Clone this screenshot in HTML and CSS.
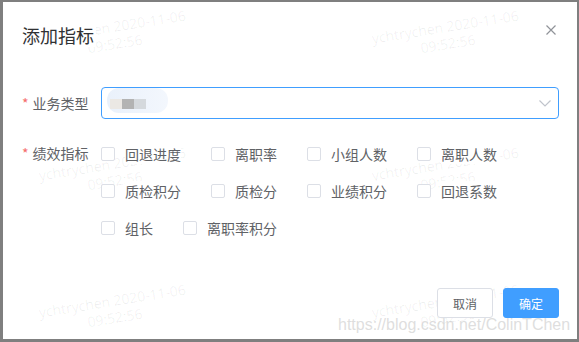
FILE: index.html
```html
<!DOCTYPE html>
<html lang="zh-CN">
<head>
  <meta charset="UTF-8">
  <meta name="viewport" content="width=device-width, initial-scale=1.0">
  <title>添加指标</title>
  <link rel="stylesheet" href="styles.css">
</head>
<body>

  <!-- Dialog -->
  <div class="dialog">

    <!-- user watermark, tiled under the content -->
    <div class="watermarks">
      <div class="wm"><span>ychtrychen 2020-11-06</span><span>09:52:56</span></div>
      <div class="wm"><span>ychtrychen 2020-11-06</span><span>09:52:56</span></div>
      <div class="wm"><span>ychtrychen 2020-11-06</span><span>09:52:56</span></div>
      <div class="wm"><span>ychtrychen 2020-11-06</span><span>09:52:56</span></div>
      <div class="wm"><span>ychtrychen 2020-11-06</span><span>09:52:56</span></div>
      <div class="wm"><span>ychtrychen 2020-11-06</span><span>09:52:56</span></div>
    </div>

    <div class="dialog-header">
      <span class="dialog-title">添加指标</span>
      <button class="dialog-close" aria-label="Close">
        <svg width="10" height="10" viewBox="0 0 10 10">
          <path d="M0.5 0.5 L9.5 9.5 M9.5 0.5 L0.5 9.5" stroke="#909399" stroke-width="1.2" fill="none"/>
        </svg>
      </button>
    </div>

    <div class="dialog-body">
      <div class="form-item">
        <label class="form-label"><i class="req">*</i>业务类型</label>
        <div class="select">
          <span class="blur-pill">
            <b class="px px1"></b><b class="px px2"></b><b class="px px3"></b>
          </span>
          <svg class="select-arrow" width="12" height="7" viewBox="0 0 12 7">
            <path d="M0.5 0.5 L6 6 L11.5 0.5" stroke="#c0c4cc" stroke-width="1.2" fill="none"/>
          </svg>
        </div>
      </div>

      <div class="form-item form-item-checks">
        <label class="form-label"><i class="req">*</i>绩效指标</label>
        <div class="check-group">
          <label class="check"><span class="check-box"></span><span class="check-text">回退进度</span></label>
          <label class="check"><span class="check-box"></span><span class="check-text">离职率</span></label>
          <label class="check"><span class="check-box"></span><span class="check-text">小组人数</span></label>
          <label class="check"><span class="check-box"></span><span class="check-text">离职人数</span></label>
          <label class="check"><span class="check-box"></span><span class="check-text">质检积分</span></label>
          <label class="check"><span class="check-box"></span><span class="check-text">质检分</span></label>
          <label class="check"><span class="check-box"></span><span class="check-text">业绩积分</span></label>
          <label class="check"><span class="check-box"></span><span class="check-text">回退系数</span></label>
          <label class="check"><span class="check-box"></span><span class="check-text">组长</span></label>
          <label class="check"><span class="check-box"></span><span class="check-text">离职率积分</span></label>
        </div>
      </div>
    </div>

    <div class="dialog-footer">
      <button class="btn">取消</button>
      <button class="btn btn-primary">确定</button>
    </div>

    <div class="csdn-mark">https://blog.csdn.net/ColinTChen</div>
  </div>

</body>
</html>
```

FILE: styles.css
```css
body {
  margin: 0;
  background-color: #7f7f7f;
  font-family: "Noto Sans CJK SC", "Noto Sans", sans-serif;
}

/* Dialog */
.dialog {
  position: relative;
  width: 574px;
  height: 337px;
  margin: 2px 2px 3px 3px;
  background-color: #fff;
  overflow: hidden;
  display: flex;
  flex-direction: column;
}

.watermarks {
  position: absolute;
  top: -36px;
  left: -56px;
  display: grid;
  grid-template-columns: repeat(2, 333px);
  grid-auto-rows: 137px;
  z-index: 0;
}

.wm {
  display: flex;
  flex-direction: column;
  align-items: center;
  justify-content: center;
  transform: rotate(-9deg);
  font-family: "Open Sans", sans-serif;
  font-size: 14px;
  line-height: 17px;
  color: rgba(0, 0, 0, 0.065);
  white-space: nowrap;
}

.dialog-header,
.dialog-body,
.dialog-footer {
  position: relative;
  z-index: 1;
}

.dialog-header {
  padding: 21px 18px 0 19px;
  height: 24px;
}

.dialog-title {
  display: inline-block;
  font-size: 18px;
  line-height: 24px;
  color: #303133;
  background-color: #fff;
  padding-right: 2px;
}

.dialog-close {
  position: absolute;
  top: 23px;
  right: 21px;
  width: 10px;
  height: 10px;
  padding: 0;
  border: none;
  background: none;
  display: flex;
}

/* Form */
.dialog-body {
  padding: 40px 18px 0 19px;
}

.form-item {
  display: flex;
  align-items: flex-start;
}

.form-item-checks {
  margin-top: 16px;
}

.form-label {
  flex: 0 0 79px;
  font-size: 14px;
  line-height: 32px;
  color: #606266;
}

.form-item-checks .form-label {
  line-height: 37px;
}

.req {
  font-style: normal;
  color: #f56c6c;
  margin-right: 4px;
}

.select {
  flex: 1;
  height: 30px;
  border: 1px solid #409eff;
  border-radius: 4px;
  display: flex;
  align-items: flex-start;
  padding-left: 5px;
  padding-right: 7px;
}

.blur-pill {
  display: flex;
  align-items: flex-start;
  width: 58px;
  height: 25px;
  padding-left: 3px;
  border-radius: 12px;
  background: linear-gradient(90deg, #eaf1fb, #f3f7fd);
}

.px {
  width: 12px;
  height: 10px;
  margin-top: 11px;
}

.px1 { background-color: #ebe8e4; }
.px2 { background-color: #b3b3b3; }
.px3 { background-color: #d5d9dd; }

.select-arrow {
  margin-left: auto;
  margin-top: 12px;
}

.check-group {
  flex: 1;
  display: flex;
  flex-wrap: wrap;
}

.check {
  display: flex;
  align-items: center;
  height: 37px;
  margin-right: 30px;
  font-size: 14px;
  color: #606266;
}

.check-box {
  width: 12px;
  height: 12px;
  border: 1px solid #dcdfe6;
  border-radius: 2px;
  background-color: #fff;
}

.check-text {
  margin-left: 10px;
  background-color: #fff;
  line-height: 20px;
}

/* Footer */
.dialog-footer {
  margin-top: auto;
  padding: 0 18px 21px 19px;
  display: flex;
  justify-content: flex-end;
  gap: 10px;
}

.btn {
  width: 56px;
  height: 30px;
  padding: 0;
  font-family: "Noto Sans CJK SC", sans-serif;
  font-size: 12px;
  color: #606266;
  background-color: #fff;
  border: 1px solid #dcdfe6;
  border-radius: 3px;
}

.btn-primary {
  color: #fff;
  background-color: #409eff;
  border-color: #409eff;
}

.csdn-mark {
  position: absolute;
  left: 335px;
  bottom: 5px;
  z-index: 2;
  font-family: "Liberation Sans", Arial, sans-serif;
  font-size: 16px;
  line-height: 18px;
  color: rgba(200, 200, 200, 0.6);
  white-space: nowrap;
}
```
